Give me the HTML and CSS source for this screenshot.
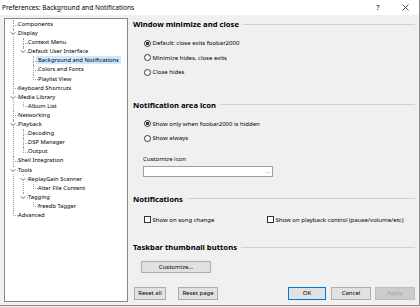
FILE: index.html
```html
<!DOCTYPE html>
<html>
  <head>
    <meta charset="utf-8">
    <title>Preferences: Background and Notifications</title>
    <link rel="stylesheet" href="styles.css">
  </head>
  <body>
    <div class="window">
      <div class="titlebar">
        <span class="title">Preferences: Background and Notifications</span>
        <span class="tb-help">?</span>
        <span class="tb-close">
          <svg width="7" height="7" viewBox="0 0 7 7"><path d="M0.5 0.5L6.5 6.5M6.5 0.5L0.5 6.5" stroke="#222" stroke-width="0.8" fill="none"/></svg>
        </span>
      </div>

      <div class="content">
        <div class="tree">
          <ul>
            <li><span class="row">Components</span></li>
            <li class="open"><span class="row"><i class="chev"></i>Display</span>
              <ul>
                <li><span class="row">Context Menu</span></li>
                <li class="open"><span class="row"><i class="chev"></i>Default User Interface</span>
                  <ul>
                    <li><span class="row"><span class="sel">Background and Notifications</span></span></li>
                    <li><span class="row">Colors and Fonts</span></li>
                    <li><span class="row">Playlist View</span></li>
                  </ul>
                </li>
              </ul>
            </li>
            <li><span class="row">Keyboard Shortcuts</span></li>
            <li class="open"><span class="row"><i class="chev"></i>Media Library</span>
              <ul>
                <li><span class="row">Album List</span></li>
              </ul>
            </li>
            <li><span class="row">Networking</span></li>
            <li class="open"><span class="row"><i class="chev"></i>Playback</span>
              <ul>
                <li><span class="row">Decoding</span></li>
                <li><span class="row">DSP Manager</span></li>
                <li><span class="row">Output</span></li>
              </ul>
            </li>
            <li><span class="row">Shell Integration</span></li>
            <li class="open"><span class="row"><i class="chev"></i>Tools</span>
              <ul>
                <li class="open"><span class="row"><i class="chev"></i>ReplayGain Scanner</span>
                  <ul>
                    <li><span class="row">Alter File Content</span></li>
                  </ul>
                </li>
                <li class="open"><span class="row"><i class="chev"></i>Tagging</span>
                  <ul>
                    <li><span class="row">freedb Tagger</span></li>
                  </ul>
                </li>
              </ul>
            </li>
            <li><span class="row">Advanced</span></li>
          </ul>
        </div>

        <div class="page">
          <div class="group-head g1">Window minimize and close</div>
          <div class="options">
            <label class="opt"><span class="radio checked"></span>Default: close exits foobar2000</label>
            <label class="opt"><span class="radio"></span>Minimize hides, close exits</label>
            <label class="opt"><span class="radio"></span>Close hides</label>
          </div>

          <div class="group-head g2">Notification area icon</div>
          <div class="options">
            <label class="opt"><span class="radio checked"></span>Show only when foobar2000 is hidden</label>
            <label class="opt"><span class="radio"></span>Show always</label>
          </div>
          <div class="field-label">Customize icon</div>
          <div class="field"><span class="dots">...</span></div>

          <div class="group-head g3">Notifications</div>
          <div class="checks">
            <label class="opt first"><span class="check"></span>Show on song change</label>
            <label class="opt"><span class="check"></span>Show on playback control (pause/volume/etc)</label>
          </div>

          <div class="group-head g4">Taskbar thumbnail buttons</div>
          <div class="btn customize">Customize...</div>

          <div class="bottom">
            <div class="btn reset-all">Reset all</div>
            <div class="btn reset-page">Reset page</div>
            <div class="spacer"></div>
            <div class="btn ok">OK</div>
            <div class="btn cancel">Cancel</div>
            <div class="btn apply">Apply</div>
          </div>
        </div>
      </div>
    </div>
  </body>
</html>
```

FILE: styles.css
```css
html, body {
  margin: 0;
  padding: 0;
  background: #f0f0f0;
}

body {
  font-family: "Noto Sans", "Liberation Sans", sans-serif;
  font-size: 6px;
  color: #000;
}

.window {
  width: 419px;
  height: 305px;
  border-right: 1px solid #8c8c8c;
  border-bottom: 1px solid #8c8c8c;
  background: #f0f0f0;
}

.titlebar {
  height: 15px;
  background: #fff;
  display: flex;
  align-items: center;
  font-size: 6.6px;
}

.title {
  padding-left: 2px;
  flex: 1;
}

.tb-help {
  width: 8px;
  text-align: center;
  margin-right: 20px;
  font-size: 7px;
}

.tb-close {
  width: 7px;
  height: 7px;
  margin-right: 10px;
  display: flex;
}

.content {
  display: flex;
  padding: 3px 0 0 4px;
}

/* tree */
.tree {
  width: 122px;
  height: 281px;
  border: 1px solid #828790;
  background: #fff;
  padding-top: 1px;
  font-size: 5.8px;
}

.tree ul {
  list-style: none;
  margin: 0 0 0 4.5px;
  padding: 0;
}

.tree > ul {
  margin-left: 7.5px;
}

.tree li {
  position: relative;
  padding-left: 5.5px;
}

.tree li::before {
  content: "";
  position: absolute;
  left: 0;
  top: 0;
  width: 4.5px;
  height: 4.5px;
  border-left: 1px dotted #a0a0a0;
  border-bottom: 1px dotted #a0a0a0;
}

.tree li::after {
  content: "";
  position: absolute;
  left: 0;
  top: 4.5px;
  bottom: 0;
  border-left: 1px dotted #a0a0a0;
}

.tree li:last-child::after {
  display: none;
}

.row {
  display: block;
  height: 9.1px;
  line-height: 9.1px;
  white-space: nowrap;
  position: relative;
}

.chev {
  position: absolute;
  left: -8.5px;
  top: 2px;
  width: 6px;
  height: 5px;
  background: #fff url("data:image/svg+xml;utf8,<svg xmlns='http://www.w3.org/2000/svg' width='6' height='5'><path d='M0.8 1.3L3 3.5L5.2 1.3' stroke='%23404040' stroke-width='0.8' fill='none'/></svg>") no-repeat center;
  z-index: 1;
}

.sel {
  background: #cce8ff;
  padding: 0 2px;
  margin-left: -2px;
}

/* page */
.page {
  width: 282px;
  margin-left: 5px;
  height: 283px;
  display: flex;
  flex-direction: column;
}

.group-head {
  display: flex;
  align-items: center;
  height: 10px;
  font-weight: bold;
  font-size: 7.7px;
  white-space: nowrap;
}

.group-head::after {
  content: "";
  flex: 1;
  border-top: 1px solid #cfcfcf;
  margin-left: 4px;
}

.g1 { margin-top: 1px; }
.g2 { margin-top: 20px; }
.g3 { margin-top: 17px; }
.g4 { margin-top: 15px; }

.options {
  margin-top: 7px;
  padding-left: 11px;
}

.opt {
  display: flex;
  align-items: center;
  height: 14.5px;
  white-space: nowrap;
}

.radio, .check {
  width: 5px;
  height: 5px;
  border: 1px solid #333;
  background: #fff;
  margin-right: 1.5px;
  flex: none;
}

.radio {
  border-radius: 50%;
}

.radio.checked {
  background: radial-gradient(circle, #333 0 1.4px, #fff 1.6px);
}

.field-label {
  margin-top: 8px;
  margin-left: 10px;
  height: 10px;
  line-height: 10px;
}

.field {
  margin: 2px 0 0 10px;
  width: 128px;
  height: 9px;
  border: 1px solid #a0a0a0;
  background: #fff;
  position: relative;
}

.dots {
  position: absolute;
  right: 2px;
  top: 0;
  font-size: 5px;
  line-height: 8px;
  color: #888;
}

.checks {
  display: flex;
  margin-top: 9px;
  padding-left: 11px;
}

.checks .first {
  width: 123px;
}

.btn {
  height: 10px;
  line-height: 10px;
  border: 1px solid #adadad;
  background: #e1e1e1;
  text-align: center;
  flex: none;
}

.customize {
  width: 68px;
  margin: 9px 0 0 8px;
}

.bottom {
  display: flex;
  margin-top: auto;
  margin-bottom: 1px;
}

.bottom .btn {
  height: 11px;
  line-height: 11px;
}

.reset-all {
  width: 30px;
  margin-left: 1px;
}

.reset-page {
  width: 38px;
  margin-left: 12px;
}

.spacer {
  flex: 1;
}

.ok {
  width: 36px;
  border-color: #0078d7;
}

.cancel {
  width: 38px;
  margin-left: 5px;
}

.apply {
  width: 38px;
  margin-left: 4px;
  background: #cccccc;
  border-color: #bfbfbf;
  color: #a0a0a0;
}
```
